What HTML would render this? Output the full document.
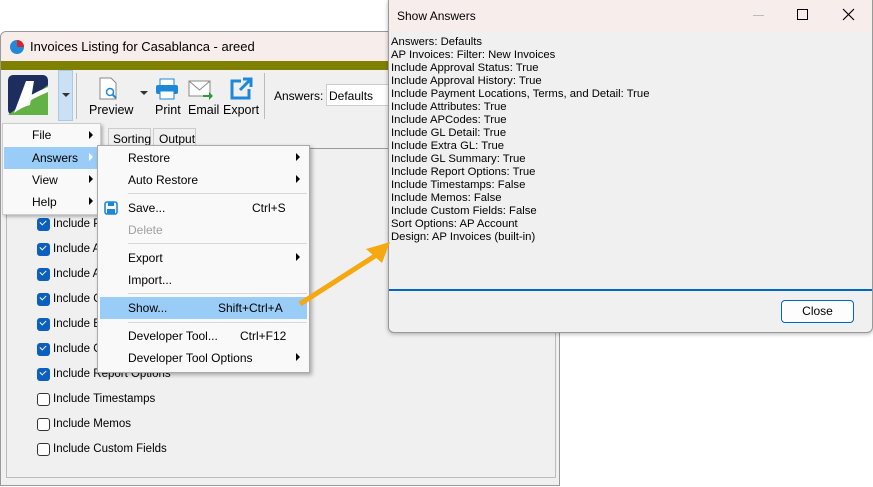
<!DOCTYPE html>
<html><head><style>
*{margin:0;padding:0;box-sizing:border-box}
body{width:873px;height:487px;background:#fff;position:relative;overflow:hidden;font-family:"Liberation Sans",sans-serif;font-size:12px;color:#000}
.a{position:absolute}
.mi{position:absolute;font-size:12px;white-space:nowrap}
.cb{position:absolute;left:37px;width:13px;height:13px;border-radius:3px;background:#0a5fbf}
.cb.u{background:#fff;border:1px solid #333}
.cb:not(.u)::after{content:"";position:absolute;left:3px;top:2px;width:5px;height:3px;border-left:1.5px solid #fff;border-bottom:1.5px solid #fff;transform:rotate(-45deg)}
.cl{position:absolute;left:53px;font-size:11.5px}
.tri{position:absolute;width:0;height:0;border-top:4px solid transparent;border-bottom:4px solid transparent;border-left:4px solid #000}
.sep{position:absolute;height:1px;background:#d8d8d8}
</style></head><body>
<div class="a" style="left:0;top:31px;width:560px;height:455px;background:#f0f0f0;border:1px solid #999;border-radius:6px 6px 0 0"></div>
<div class="a" style="left:1px;top:32px;width:558px;height:29px;background:#f7eeeb;border-radius:6px 6px 0 0"></div>
<svg class="a" style="left:9px;top:39px" width="16" height="16"><circle cx="8" cy="8" r="7" fill="#1f8ad8"/><path d="M8 8 L8 1 A7 7 0 0 1 15 8 Z" fill="#d8232a"/></svg>
<div class="a" style="left:30px;top:39px;font-size:13px">Invoices Listing for Casablanca - areed</div>
<div class="a" style="left:1px;top:61px;width:558px;height:9px;background:#808000"></div>
<div class="a" style="left:1px;top:70px;width:558px;height:52px;background:#f0f0f0"></div>
<svg class="a" style="left:8px;top:75px" width="40" height="40"><rect width="40" height="40" rx="5" fill="#1d2d5e"/><path d="M0 40 L40 40 L40 10 Q20 25 0 40Z" fill="#62b246"/><path d="M6 38 L18 6 L26 6 L22 30 Q14 32 6 38Z" fill="#fff"/><path d="M10 28 Q25 18 40 12 L40 17 Q25 23 12 32Z" fill="#fff"/></svg>
<div class="a" style="left:58px;top:70px;width:15px;height:51px;background:#c9e0f5;border:1px solid #a8cbea"></div>
<div class="a" style="left:62px;top:93px;border-left:4px solid transparent;border-right:4px solid transparent;border-top:4px solid #333"></div>
<div class="a" style="left:76px;top:73px;width:1px;height:46px;background:#bbb"></div>
<svg class="a" style="left:98px;top:77px" width="22" height="24"><path d="M2 1 H13 L18 6 V22 H2 Z" fill="#fff" stroke="#888"/><circle cx="12" cy="15" r="3.5" fill="none" stroke="#1e88d8" stroke-width="1.5"/><path d="M14.5 17.5 L18 21" stroke="#1e88d8" stroke-width="2"/></svg>
<div class="a" style="left:89px;top:103px;font-size:12.5px">Preview</div>
<div class="a" style="left:140px;top:91px;border-left:4px solid transparent;border-right:4px solid transparent;border-top:4px solid #333"></div>
<svg class="a" style="left:155px;top:78px" width="24" height="22"><rect x="5" y="1" width="14" height="7" fill="#fff" stroke="#1e88d8"/><rect x="1" y="7" width="22" height="9" rx="2" fill="#1e88d8"/><rect x="5" y="13" width="14" height="8" fill="#fff" stroke="#1e88d8"/></svg>
<div class="a" style="left:155px;top:103px;font-size:12.5px">Print</div>
<svg class="a" style="left:188px;top:80px" width="26" height="20"><rect x="1" y="1" width="21" height="15" fill="#fff" stroke="#888"/><path d="M1 1 L11.5 10 L22 1" fill="none" stroke="#888"/><path d="M15 15 H21 V12 L25 16 L21 20 V17 H15Z" fill="#2e9a3a"/></svg>
<div class="a" style="left:188px;top:103px;font-size:12.5px">Email</div>
<svg class="a" style="left:229px;top:77px" width="24" height="24"><path d="M12 4 H3 V21 H20 V12" fill="none" stroke="#1e88d8" stroke-width="3"/><path d="M11 13 L21 3 M14 2 H22 V10" fill="none" stroke="#1e88d8" stroke-width="3"/></svg>
<div class="a" style="left:223px;top:103px;font-size:12.5px">Export</div>
<div class="a" style="left:264px;top:73px;width:1px;height:46px;background:#bbb"></div>
<div class="a" style="left:274px;top:89px">Answers:</div>
<div class="a" style="left:326px;top:84px;width:70px;height:22px;background:#fff;border:1px solid #ccc;padding:4px 2px">Defaults</div>
<div class="a" style="left:108px;top:128px;width:43px;height:20px;border:1px solid #ccc;border-bottom:none;background:#f0f0f0;padding:3px 4px">Sorting</div>
<div class="a" style="left:153px;top:128px;width:43px;height:20px;border:1px solid #ccc;border-bottom:none;background:#f0f0f0;padding:3px 5px">Output</div>
<div class="a" style="left:6px;top:148px;width:550px;height:330px;border:1px solid #bbb;border-top:1px solid #999"></div>
<div class="cb" style="top:218px"></div><div class="cl" style="top:218px">Include P</div>
<div class="cb" style="top:243px"></div><div class="cl" style="top:243px">Include A</div>
<div class="cb" style="top:268px"></div><div class="cl" style="top:268px">Include A</div>
<div class="cb" style="top:293px"></div><div class="cl" style="top:293px">Include G</div>
<div class="cb" style="top:318px"></div><div class="cl" style="top:318px">Include E</div>
<div class="cb" style="top:343px"></div><div class="cl" style="top:343px">Include G</div>
<div class="cb" style="top:368px"></div><div class="cl" style="top:368px">Include Report Options</div>
<div class="cb u" style="top:393px"></div><div class="cl" style="top:393px">Include Timestamps</div>
<div class="cb u" style="top:418px"></div><div class="cl" style="top:418px">Include Memos</div>
<div class="cb u" style="top:443px"></div><div class="cl" style="top:443px">Include Custom Fields</div>
<div class="a" style="left:2px;top:123px;width:99px;height:92px;background:#f9f9f9;border:1px solid #ccc;box-shadow:2px 2px 3px rgba(0,0,0,.25)"></div>
<div class="a" style="left:4px;top:147px;width:94px;height:22px;background:#99ccf7"></div>
<div class="mi" style="left:32px;top:128px">File</div><div class="tri" style="left:89px;top:131px"></div>
<div class="mi" style="left:32px;top:151px">Answers</div><div class="tri" style="left:89px;top:153px;border-left-color:#fff"></div>
<div class="mi" style="left:32px;top:173px">View</div><div class="tri" style="left:89px;top:175px"></div>
<div class="mi" style="left:32px;top:195px">Help</div><div class="tri" style="left:89px;top:197px"></div>
<div class="a" style="left:97px;top:145px;width:213px;height:228px;background:#f9f9f9;border:1px solid #aaa;box-shadow:2px 2px 4px rgba(0,0,0,.3)"></div>
<div class="mi" style="left:128px;top:151px">Restore</div><div class="tri" style="left:296px;top:153px"></div>
<div class="mi" style="left:128px;top:173px">Auto Restore</div><div class="tri" style="left:296px;top:175px"></div>
<div class="sep" style="left:128px;top:193px;width:179px"></div>
<svg class="a" style="left:104px;top:201px" width="14" height="14"><rect x="1" y="1" width="12" height="12" rx="2" fill="none" stroke="#1e88d8" stroke-width="1.6"/><rect x="4" y="1" width="6" height="4" fill="#1e88d8"/><rect x="3" y="8" width="8" height="5" fill="#1e88d8"/></svg>
<div class="mi" style="left:128px;top:201px">Save...</div><div class="mi" style="left:252px;top:201px">Ctrl+S</div>
<div class="mi" style="left:128px;top:223px;color:#a0a0a0">Delete</div>
<div class="sep" style="left:128px;top:243px;width:179px"></div>
<div class="mi" style="left:128px;top:251px">Export</div><div class="tri" style="left:296px;top:253px"></div>
<div class="mi" style="left:128px;top:273px">Import...</div>
<div class="sep" style="left:128px;top:293px;width:179px"></div>
<div class="a" style="left:100px;top:297px;width:207px;height:22px;background:#99ccf7"></div>
<div class="mi" style="left:128px;top:301px">Show...</div><div class="mi" style="left:218px;top:301px">Shift+Ctrl+A</div>
<div class="sep" style="left:128px;top:322px;width:179px"></div>
<div class="mi" style="left:128px;top:329px">Developer Tool...</div><div class="mi" style="left:240px;top:329px">Ctrl+F12</div>
<div class="mi" style="left:128px;top:351px">Developer Tool Options</div><div class="tri" style="left:296px;top:353px"></div>
<div class="a" style="left:388px;top:0;width:485px;height:333px;background:#f0f0f0;border:1px solid #999;border-radius:0 0 6px 6px;box-shadow:0 1px 4px rgba(0,0,0,.3)"></div>
<div class="a" style="left:389px;top:0;width:483px;height:32px;background:#f7eeeb"></div>
<div class="a" style="left:397px;top:9px;font-size:12px">Show Answers</div>
<div class="a" style="left:753px;top:15px;width:11px;height:1px;background:#bbb"></div>
<div class="a" style="left:797px;top:9px;width:11px;height:11px;border:1.3px solid #000"></div>
<svg class="a" style="left:842px;top:8px" width="13" height="13"><path d="M1 1 L12 12 M12 1 L1 12" stroke="#000" stroke-width="1.2"/></svg>
<div class="a" style="left:391px;top:36px;font-size:11.3px;line-height:13px;white-space:pre">Answers: Defaults
AP Invoices: Filter: New Invoices
Include Approval Status: True
Include Approval History: True
Include Payment Locations, Terms, and Detail: True
Include Attributes: True
Include APCodes: True
Include GL Detail: True
Include Extra GL: True
Include GL Summary: True
Include Report Options: True
Include Timestamps: False
Include Memos: False
Include Custom Fields: False
Sort Options: AP Account
Design: AP Invoices (built-in)</div>
<div class="a" style="left:389px;top:289px;width:483px;height:2px;background:#0067c0"></div>
<div class="a" style="left:781px;top:300px;width:73px;height:23px;background:#fdfdfd;border:1px solid #0067c0;border-radius:4px;text-align:center;line-height:21px">Close</div>
<svg class="a" style="left:0;top:0" width="873" height="487"><path d="M300 304 L378 254" stroke="#f5a80f" stroke-width="5"/><path d="M390 242 L366 249 L382 263Z" fill="#f5a80f"/></svg>
</body></html>
